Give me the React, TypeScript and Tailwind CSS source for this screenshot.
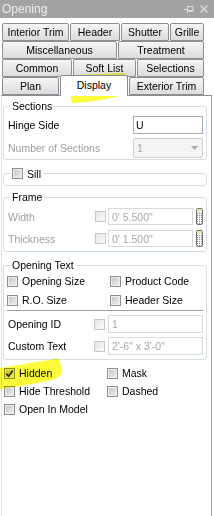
import React from "react";

interface TabDef {
  label: string;
  w: string;
  active?: boolean;
}

const tabRows: TabDef[][] = [
  [
    { label: "Interior Trim", w: "w-[67px]" },
    { label: "Header", w: "w-[50px]" },
    { label: "Shutter", w: "w-[48px]" },
    { label: "Grille", w: "flex-1" },
  ],
  [
    { label: "Miscellaneous", w: "w-[115px]" },
    { label: "Treatment", w: "flex-1" },
  ],
  [
    { label: "Common", w: "w-[70px]" },
    { label: "Soft List", w: "w-[63px]" },
    { label: "Selections", w: "flex-1" },
  ],
  [
    { label: "Plan", w: "w-[57px]" },
    { label: "Display", w: "w-[68px]", active: true },
    { label: "Exterior Trim", w: "flex-1" },
  ],
];

function Tab({ tab }: { tab: TabDef }) {
  if (tab.active) {
    return (
      <div
        className={`${tab.w} relative z-10 -mb-px h-[21px] rounded-t-[2px] border-x border-t border-[#898c95] bg-white flex items-center justify-center pb-[3px]`}
      >
        {tab.label}
      </div>
    );
  }
  return (
    <div
      className={`${tab.w} h-[18px] rounded-t-[2px] border border-[#8e8f8f] bg-linear-to-b from-[#f6f6f6] to-[#dcdcdc] flex items-center justify-center`}
    >
      {tab.label}
    </div>
  );
}

function Check({ checked, disabled }: { checked?: boolean; disabled?: boolean }) {
  return (
    <span
      className={
        disabled
          ? "flex-none w-[11px] h-[11px] border border-[#c8c8c8] bg-linear-to-br from-[#e6e6e6] to-[#fbfbfb] flex items-center justify-center"
          : "flex-none w-[11px] h-[11px] border border-[#8e8f8f] bg-linear-to-br from-[#c2c2c2] to-[#f2f2f2] shadow-[inset_0_0_0_1px_#f0f0f0] flex items-center justify-center"
      }
    >
      {checked && (
        <svg width="9" height="9" viewBox="0 0 9 9">
          <path d="M1.3 4.6 L3.6 7.2 L7.8 1.4" fill="none" stroke="#2b2b2b" strokeWidth="1.7" />
        </svg>
      )}
    </span>
  );
}

function CheckLabel({ label, checked }: { label: string; checked?: boolean }) {
  return (
    <div className="flex items-center h-[14px]">
      <Check checked={checked} />
      <span className="ml-[4px]">{label}</span>
    </div>
  );
}

function Spinner() {
  return (
    <svg width="7" height="17" viewBox="0 0 7 17" className="flex-none ml-[3px]">
      <rect x="0.5" y="0.5" width="6" height="16" rx="1" fill="#f6f6f6" stroke="#707070" />
      <rect x="1" y="1" width="5" height="3" fill="#dcecaa" />
      {[5, 7, 9, 11, 13, 15].map((y) =>
        [1, 3, 5].map((x) => <rect key={`${x}-${y}`} x={x} y={y} width="1" height="1" fill="#8a8a8a" />)
      )}
    </svg>
  );
}

function Legend({ children }: { children: React.ReactNode }) {
  return <legend className="ml-[6px] px-[2px] leading-[12px]">{children}</legend>;
}

export default function App() {
  return (
    <div className="relative w-[214px] h-[516px] overflow-hidden bg-white text-black text-[10.5px] leading-[14px] font-['Liberation_Sans',Arial,sans-serif]">
      {/* title bar */}
      <div className="h-[18px] bg-[#a3a3a3] flex items-center pl-[2px] pr-[6px]">
        <span className="flex-1 text-[12px] text-[#ececec]">Opening</span>
        <svg width="10" height="8" viewBox="0 0 10 8" className="mr-[6px]">
          <path d="M0 4.5 H3 M3.5 1 V8 M4 1.5 H9 V6.5 H4" fill="none" stroke="#dadada" />
          <path d="M4 5.5 H9" stroke="#dadada" />
        </svg>
        <svg width="8" height="8" viewBox="0 0 8 8">
          <path d="M0.5 0.5 L7.5 7.5 M7.5 0.5 L0.5 7.5" stroke="#dadada" strokeWidth="1.4" />
        </svg>
      </div>

      {/* tabs */}
      <div className="ml-[2px] mt-[5px] w-[202px] flex flex-col">
        {tabRows.map((row, i) => (
          <div key={i} className="flex items-end gap-px h-[18px]">
            {row.map((t) => (
              <Tab key={t.label} tab={t} />
            ))}
          </div>
        ))}
      </div>

      {/* tab page */}
      <div className="ml-[1px] w-[211px] h-[421px] border-t border-l border-r border-t-[#898c95] border-l-[#e4e4e4] border-r-[#a5a5a5] bg-white">
        {/* Sections */}
        <fieldset className="ml-[1px] mt-[4px] w-[204px] rounded-[3px] border border-[#d5dfe5]">
          <Legend>Sections</Legend>
          <div className="pl-[4px] pr-[3px] pt-[4px] pb-[1px] flex flex-col gap-[4px]">
            <div className="flex items-center h-[18px]">
              <span className="flex-1">Hinge Side</span>
              <div className="w-[70px] h-[18px] border border-[#abadb3] bg-white px-[2px] flex items-center">U</div>
            </div>
            <div className="flex items-center h-[20px]">
              <span className="flex-1 text-[#a0a0a0]">Number of Sections</span>
              <div className="w-[70px] h-[20px] rounded-[2px] border border-[#cfcfcf] bg-[#f4f4f4] pl-[3px] pr-[4px] flex items-center justify-between text-[#a3a3a3]">
                <span>1</span>
                <svg width="7" height="4" viewBox="0 0 7 4">
                  <path d="M0 0 H7 L3.5 4 Z" fill="#acacac" />
                </svg>
              </div>
            </div>
          </div>
        </fieldset>

        {/* Sill */}
        <fieldset className="ml-[1px] mt-[7px] w-[204px] rounded-[3px] border border-[#d5dfe5]">
          <legend className="ml-[6px] px-[2px] h-[13px] flex items-center">
            <Check />
            <span className="ml-[4px]">Sill</span>
          </legend>
          <div className="h-[5px]" />
        </fieldset>

        {/* Frame */}
        <fieldset className="ml-[1px] mt-[5px] w-[204px] rounded-[3px] border border-[#d5dfe5]">
          <Legend>Frame</Legend>
          <div className="pl-[4px] pr-[3px] pt-[5px] pb-[4px] flex flex-col gap-[5px]">
            {[
              ["Width", "0' 5.500\""],
              ["Thickness", "0' 1.500\""],
            ].map(([label, value]) => (
              <div key={label} className="flex items-center h-[17px]">
                <span className="flex-1 text-[#a0a0a0]">{label}</span>
                <Check disabled />
                <div className="ml-[2px] w-[85px] h-[17px] border border-[#d9d9d9] bg-white px-[3px] flex items-center text-[#a8a8a8]">
                  {value}
                </div>
                <Spinner />
              </div>
            ))}
          </div>
        </fieldset>

        {/* Opening Text */}
        <fieldset className="ml-[1px] mt-[7px] w-[204px] rounded-[3px] border border-[#d5dfe5]">
          <Legend>Opening Text</Legend>
          <div className="pt-[3px] pb-[4px] flex flex-col">
            <div className="pl-[3px] grid grid-cols-[103px_1fr] gap-y-[5px]">
              <CheckLabel label="Opening Size" />
              <CheckLabel label="Product Code" />
              <CheckLabel label="R.O. Size" />
              <CheckLabel label="Header Size" />
            </div>
            <div className="mt-[3px] ml-[3px] mr-[3px] h-px bg-[#a0a0a0]" />
            <div className="mt-[4px] pl-[4px] pr-[3px] flex flex-col gap-[4px]">
              {[
                ["Opening ID", "1"],
                ["Custom Text", "2'-6\" x 3'-0\""],
              ].map(([label, value]) => (
                <div key={label} className="flex items-center h-[18px]">
                  <span className="flex-1">{label}</span>
                  <Check disabled />
                  <div className="ml-[3px] w-[95px] h-[18px] border border-[#d9d9d9] bg-white px-[3px] flex items-center text-[#a8a8a8]">
                    {value}
                  </div>
                </div>
              ))}
            </div>
          </div>
        </fieldset>

        {/* bottom options */}
        <div className="mt-[6px] pl-[2px] grid grid-cols-[103px_1fr] gap-y-[4px]">
          <CheckLabel label="Hidden" checked />
          <CheckLabel label="Mask" />
          <CheckLabel label="Hide Threshold" />
          <CheckLabel label="Dashed" />
          <CheckLabel label="Open In Model" />
        </div>
      </div>

      {/* marker highlights drawn over the screenshot */}
      <svg
        width="62"
        height="33"
        viewBox="0 0 62 33"
        className="absolute left-[68px] top-[72px] mix-blend-multiply pointer-events-none"
      >
        <path
          d="M3 5 Q2 3 6 3 L55 1 Q58 1 58 4 L58 19 Q58 22 54 23 Q35 29 8 31 Q3 31 3 27 Z"
          fill="#fcfc3a"
        />
      </svg>
      <svg
        width="64"
        height="34"
        viewBox="0 0 64 34"
        className="absolute left-0 top-[357px] mix-blend-multiply pointer-events-none"
      >
        <path d="M0 11 Q20 8 55 2 Q59 1 60 5 L62 14 Q62 20 52 23 Q30 28 0 32 Z" fill="#fcfc3a" />
      </svg>
    </div>
  );
}
